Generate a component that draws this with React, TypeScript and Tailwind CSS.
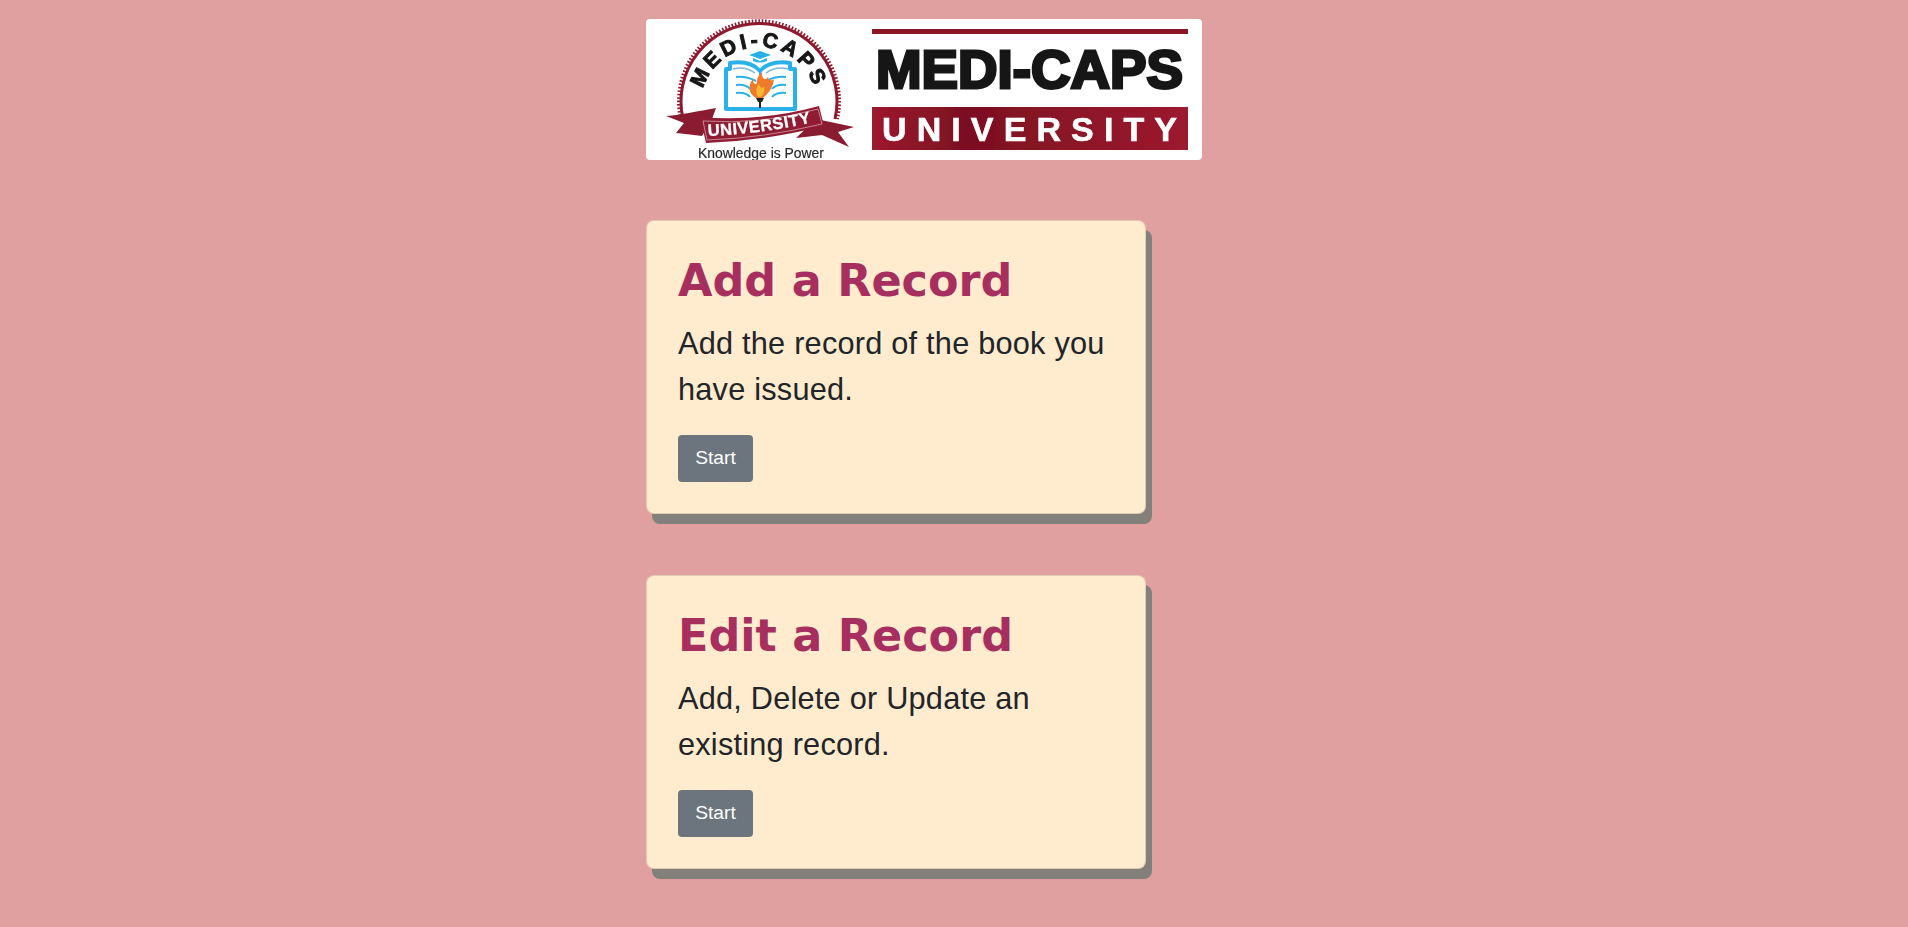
import React from "react";

function Logo() {
  const book = "#29b1ea";
  const maroon = "#8e1a2e";
  return (
    <svg width="556" height="141" viewBox="0 0 556 141" className="block" role="img" aria-label="Medi-Caps University logo">
      <defs>
        <linearGradient id="bar" x1="0" x2="1" y1="0" y2="0">
          <stop offset="0" stopColor="#9c1a2e" />
          <stop offset="0.3" stopColor="#7a1020" />
          <stop offset="0.6" stopColor="#8a1426" />
          <stop offset="1" stopColor="#9c1a2e" />
        </linearGradient>
        <filter id="soft" x="-5%" y="-5%" width="110%" height="110%">
          <feGaussianBlur stdDeviation="0.45" />
        </filter>
        <path id="emblemArc" d="M 55 86 A 58 58 0 0 1 171 86" />
        <path id="ribbonArc" d="M 62 117 Q 115 115 168 103" />
      </defs>
      <g filter="url(#soft)">
        <rect x="226" y="10" width="316" height="5" fill="#8b1528" />
        <text x="230" y="69" fontFamily="'Liberation Sans', Arial, sans-serif" fontWeight="700" fontSize="54" fill="#191919" stroke="#191919" strokeWidth="3" textLength="307" lengthAdjust="spacingAndGlyphs">MEDI-CAPS</text>
        <rect x="226" y="88" width="316" height="43" fill="url(#bar)" />
        <text x="236" y="122" fontFamily="'Liberation Sans', Arial, sans-serif" fontWeight="700" fontSize="34" fill="#fff" stroke="#fff" strokeWidth="0.6" textLength="295">UNIVERSITY</text>

        <path d="M 37 100 A 78 78 0 1 1 189 100" fill="none" stroke={maroon} strokeWidth="3" />
        <path d="M 35 100 A 80 80 0 1 1 191 100" fill="none" stroke={maroon} strokeWidth="4" strokeDasharray="1.6 1.8" />
        <text fontFamily="'Liberation Sans', Arial, sans-serif" fontWeight="700" fontSize="21" fill="#191919" stroke="#191919" strokeWidth="1">
          <textPath href="#emblemArc" startOffset="50%" textAnchor="middle" letterSpacing="3.5">MEDI-CAPS</textPath>
        </text>

        <path d="M114 32 l11 4 l-11 4 l-11 -4 z" fill={book} />
        <path d="M107 39 v3 q7 3 14 0 v-3 l-7 3 z" fill={book} />
        <path d="M80 50 h4 v-6 q20 -3 30 8 q10 -11 30 -8 v6 h5 v40 H80 z" fill="#fff" stroke={book} strokeWidth="4" strokeLinejoin="round" />
        <path d="M114 52 v32" stroke={book} strokeWidth="2" />
        <path d="M90 66 q10 -1 14 4 M90 74 q10 -1 14 4 M90 58 q10 -1 20 4 M140 66 q-10 -1 -14 4 M140 74 q-10 -1 -14 4 M140 58 q-10 -1 -20 4" fill="none" stroke={book} strokeWidth="2" />
        <path d="M87 50 q12 -3 22 4 M142 50 q-12 -3 -22 4" fill="none" stroke="#7fb6d0" strokeWidth="1.5" />

        <path d="M110 79 C102 74 102 66 107 60 C107 65 110 66 111 64 C110 60 113 56 116 53 C115 60 120 62 122 58 C122 62 127 62 128 60 C127 68 123 74 117 79 Z" fill="#ee7a2a" />
        <path d="M112 78 C109 72 111 67 113 65 C114 69 117 70 118 67 C119 71 118 75 115 78 Z" fill="#f7b733" />
        <path d="M110 79 h8 l-2 4 h-1 v6 h-2 v-6 h-1 z" fill="#222" />

        <path d="M20 97 C36 96 52 92 70 89 L66 100 L56 117 C48 116 40 115 30 114 L38 104 Z" fill="#8a1b30" />
        <path d="M170 100 L208 108 L192 113 L203 128 L176 116 L150 119 Z" fill="#8a1b30" />
        <path d="M54 98 Q 115 103 173 87 L178 107 Q 118 122 60 124 Z" fill="#8f1d33" />
        <path d="M57 102 Q 115 106 172 90 L176 105 Q 118 119 61 121 Z" fill="none" stroke="#e9c9cf" strokeWidth="0.6" />
        <text fontFamily="'Liberation Sans', Arial, sans-serif" fontWeight="700" fontSize="16.5" fill="#fff" stroke="#fff" strokeWidth="0.3">
          <textPath href="#ribbonArc" startOffset="0" textLength="104">UNIVERSITY</textPath>
        </text>
        <text x="52" y="139" fontFamily="'Liberation Sans', Arial, sans-serif" fontSize="14.5" fill="#2a2a2a" stroke="#2a2a2a" strokeWidth="0.2" textLength="126" lengthAdjust="spacingAndGlyphs">Knowledge is Power</text>
      </g>
    </svg>
  );
}

function RecordCard({ title, children }: { title: string; children: React.ReactNode }) {
  return (
    <div className="w-[500px] h-[294px] box-border rounded-[8px] border border-[#00000020] bg-[#ffebcd] shadow-[6px_10px_0_0_#83807b] px-[31px] pt-[33px]">
      <h5 className="m-0 text-[#a62f5f] font-bold text-[44.5px] leading-[53px] font-['DejaVu_Sans',Verdana,sans-serif]">{title}</h5>
      <p className="m-0 mt-[14px] text-[#212529] text-[30.7px] tracking-[0.23px] leading-[46px] font-['Liberation_Sans',Arial,sans-serif]">{children}</p>
      <button className="block mt-[22px] w-[75px] h-[47px] rounded-[4px] bg-[#6c757d] text-white text-[19.2px] font-['Liberation_Sans',Arial,sans-serif]">Start</button>
    </div>
  );
}

export default function App() {
  return (
    <div className="min-h-screen bg-[#e0a0a0] pl-[646px] pt-[19px] pb-[47px] font-['Liberation_Sans',Arial,sans-serif]">
      <div className="w-[556px] h-[141px] rounded-[4px] bg-white overflow-hidden">
        <Logo />
      </div>
      <div className="mt-[60px] flex flex-col gap-[61px]">
        <RecordCard title="Add a Record">Add the record of the book you have issued.</RecordCard>
        <RecordCard title="Edit a Record">Add, Delete or Update an existing record.</RecordCard>
      </div>
    </div>
  );
}
